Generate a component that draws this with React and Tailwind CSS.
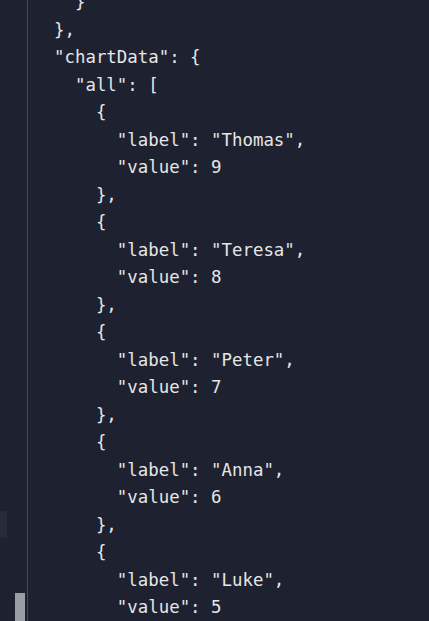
import React from "react";

const people = [
  ["Thomas", 9],
  ["Teresa", 8],
  ["Peter", 7],
  ["Anna", 6],
  ["Luke", 5],
];

function buildLines() {
  const lines = ["  }", "},", '"chartData": {', '  "all": ['];
  people.forEach(([name, v], i) => {
    lines.push("    {");
    lines.push(`      "label": "${name}",`);
    lines.push(`      "value": ${v}`);
    if (i < people.length - 1) lines.push("    },");
  });
  return lines;
}

export default function App() {
  const lines = buildLines();
  return (
    <div className="w-[429px] h-[621px] bg-[#1d2130] overflow-hidden flex relative">
      <div className="w-[28px] h-full border-r border-[#454857] relative shrink-0">
        <div className="absolute left-0 top-[511px] w-[7px] h-[27px] bg-[#262b3a]" />
        <div className="absolute left-[15px] top-[593px] w-[10px] h-[28px] bg-[#9a9ca6]" />
      </div>
      <div
        className="pl-[26px] mt-[-11px] text-[#e6e6e6] text-[17.4px] leading-[27.5px] whitespace-pre"
        style={{ fontFamily: '"DejaVu Sans Mono", monospace' }}
      >
        {lines.map((l, i) => (
          <div key={i}>{l}</div>
        ))}
      </div>
    </div>
  );
}
